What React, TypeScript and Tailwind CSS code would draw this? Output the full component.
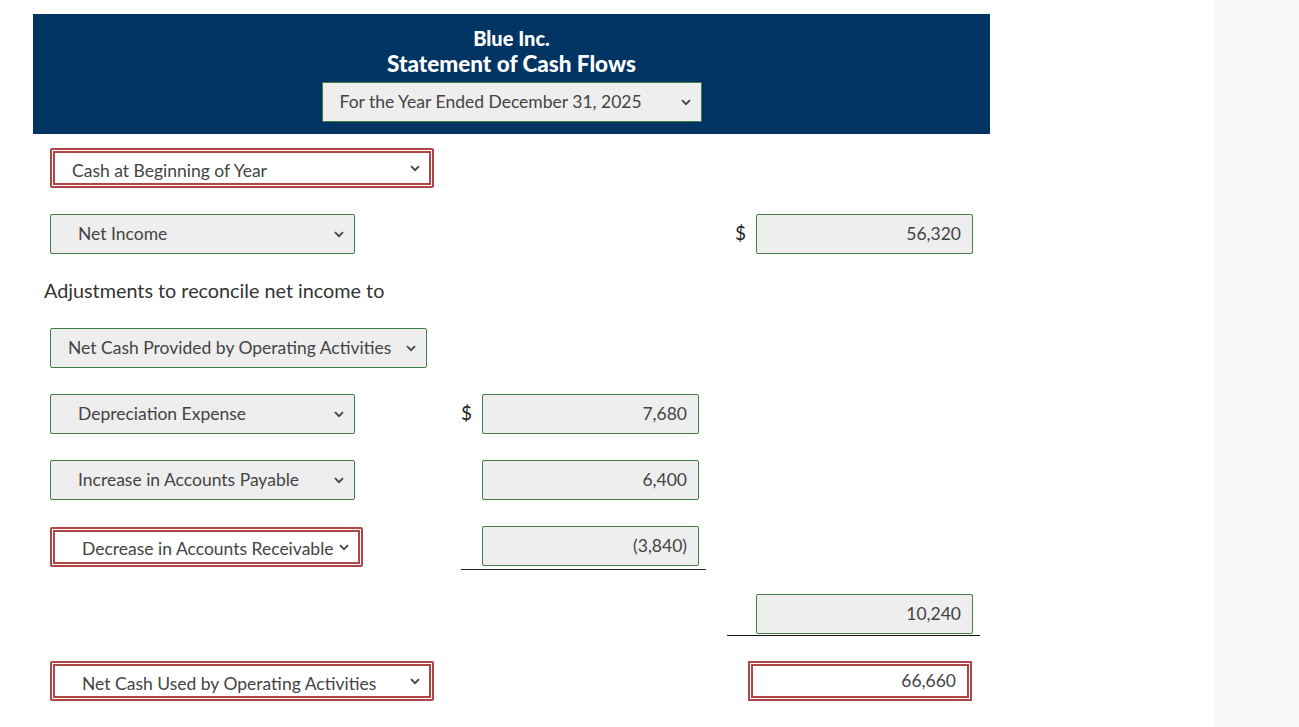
import React from 'react'

const FONT = { fontFamily: 'Lato, "Noto Sans", sans-serif' }

function Chevron() {
  return (
    <svg width="10" height="7" viewBox="0 0 10 7" className="shrink-0">
      <path d="M1 1.2 L5 5.2 L9 1.2" fill="none" stroke="#444" strokeWidth="1.8" />
    </svg>
  )
}

// dropdown that has been answered right (grey, green edge) or wrong (white, red double edge)
function Pick({ label, width, pad, bad = false, low = false }: { label: string; width: string; pad: string; bad?: boolean; low?: boolean }) {
  if (bad) {
    return (
      <div className={`${width} h-10 border-[5px] border-double border-[#b04545] bg-white rounded-[2px] flex items-center pr-[9px] ${pad}`}>
        <span className={`flex-1 text-[17.5px] text-[#444] whitespace-nowrap ${low ? 'mt-[6px]' : 'mt-[4px]'}`}>{label}</span>
        <Chevron />
      </div>
    )
  }
  return (
    <div className={`${width} h-10 border border-[#3f7f3f] bg-[#eeeeee] rounded-[2px] flex items-center pr-[10px] ${pad}`}>
      <span className="flex-1 text-[17.5px] text-[#444] whitespace-nowrap">{label}</span>
      <Chevron />
    </div>
  )
}

function Amount({ value, bad = false }: { value: string; bad?: boolean }) {
  if (bad) {
    return (
      <div className="w-[224px] h-10 border-[5px] border-double border-[#b04545] bg-white flex items-center justify-end pr-[11px] text-[17.5px] text-[#444]">
        {value}
      </div>
    )
  }
  return (
    <div className="w-[217px] h-10 border border-[#3f7f3f] bg-[#eeeeee] rounded-[2px] flex items-center justify-end pr-[11px] text-[17.5px] text-[#444]">
      {value}
    </div>
  )
}

const Dollar = () => <span className="text-[19px] text-[#222] leading-none">$</span>

export default function App() {
  return (
    <div className="min-h-screen flex bg-white" style={FONT}>
      <main className="w-[1215px] shrink-0 pl-[33px] pt-[14px]">
        <header className="w-[957px] h-[120px] bg-[#003462] flex flex-col items-center pt-[11px]">
          <h1 className="text-white font-black text-[20px] leading-[26px]">Blue Inc.</h1>
          <h2 className="text-white font-black text-[22.5px] leading-[26px]">Statement of Cash Flows</h2>
          <div className="mt-[5px] w-[380px] h-10 bg-[#eeeeee] border border-[#3f7f3f] flex items-center pl-[17px] pr-[10px]">
            <span className="flex-1 text-[17.5px] text-[#444]">For the Year Ended December 31, 2025</span>
            <Chevron />
          </div>
        </header>

        <div className="w-[957px]">
          {/* cash at start */}
          <div className="mt-[14px] pl-[17px]">
            <Pick label="Cash at Beginning of Year" width="w-[384px]" pad="pl-[17px]" bad low />
          </div>

          {/* net income */}
          <div className="mt-[26px] flex items-center h-10">
            <div className="w-[428px] pl-[17px]">
              <Pick label="Net Income" width="w-[305px]" pad="pl-[27px]" />
            </div>
            <div className="w-[266px]" />
            <div className="w-[263px] flex items-center pl-[8px]">
              <div className="w-[21px]"><Dollar /></div>
              <Amount value="56,320" />
            </div>
          </div>

          <p className="mt-[24px] pl-[11px] text-[19.8px] text-[#333] leading-[24px]">Adjustments to reconcile net income to</p>

          <div className="mt-[26px] pl-[17px]">
            <Pick label="Net Cash Provided by Operating Activities" width="w-[377px]" pad="pl-[17px]" />
          </div>

          {/* adjustments */}
          <div className="mt-[26px] flex items-center h-10">
            <div className="w-[428px] pl-[17px]">
              <Pick label="Depreciation Expense" width="w-[305px]" pad="pl-[27px]" />
            </div>
            <div className="w-[266px] flex items-center">
              <div className="w-[21px]"><Dollar /></div>
              <Amount value="7,680" />
            </div>
          </div>

          <div className="mt-[26px] flex items-center h-10">
            <div className="w-[428px] pl-[17px]">
              <Pick label="Increase in Accounts Payable" width="w-[305px]" pad="pl-[27px]" />
            </div>
            <div className="w-[266px] flex items-center pl-[21px]">
              <Amount value="6,400" />
            </div>
          </div>

          <div className="mt-[27px] flex items-start">
            <div className="w-[428px] pl-[17px]">
              <Pick label="Decrease in Accounts Receivable" width="w-[313px]" pad="pl-[27px]" bad />
            </div>
            <div className="w-[245px] -mt-px pb-[3px] pl-[21px] border-b border-[#222]">
              <Amount value="(3,840)" />
            </div>
          </div>

          {/* subtotal */}
          <div className="mt-[24px] flex">
            <div className="w-[694px]" />
            <div className="w-[253px] pl-[29px] pb-[1px] border-b border-[#111]">
              <Amount value="10,240" />
            </div>
          </div>

          {/* result */}
          <div className="mt-[25px] flex items-center">
            <div className="w-[715px] pl-[17px]">
              <Pick label="Net Cash Used by Operating Activities" width="w-[384px]" pad="pl-[27px]" bad low />
            </div>
            <Amount value="66,660" bad />
          </div>
        </div>
      </main>
      <aside className="flex-1 bg-[#f8f8f8]" />
    </div>
  )
}
